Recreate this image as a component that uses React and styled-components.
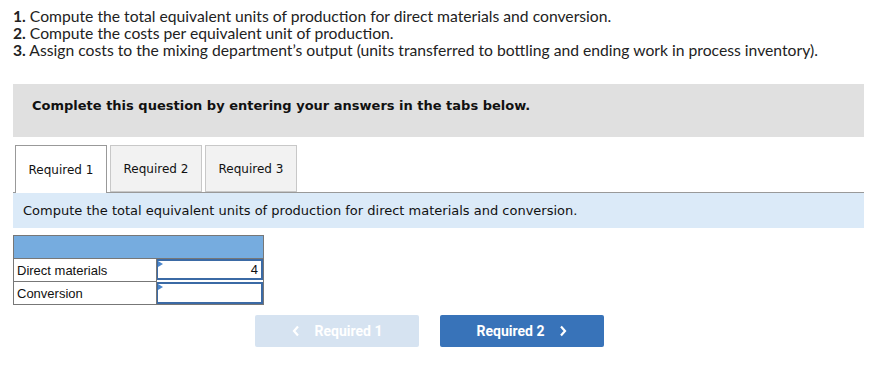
import React from "react";
import styled, { createGlobalStyle } from "styled-components";

const Global = createGlobalStyle`
  body {
    margin: 0;
    background: #fff;
  }
`;

const Page = styled.div`
  padding: 8px 24px 0 13px;
  width: 851px;
`;

const Steps = styled.ol`
  list-style: none;
  margin: 0;
  padding: 0;
  font-family: Lato, "Open Sans", sans-serif;
  font-size: 15.7px;
  line-height: 17px;
  color: #222;
`;

const Step = styled.li`
  b {
    font-weight: 700;
  }
`;

const Banner = styled.div`
  margin-top: 25px;
  height: 53px;
  box-sizing: border-box;
  background: #e0e0e0;
  padding: 14px 0 0 19px;
  font-family: "DejaVu Sans", Verdana, sans-serif;
  font-weight: bold;
  font-size: 13px;
  line-height: 16px;
  color: #111;
`;

const Tabs = styled.div`
  margin-top: 8px;
  display: flex;
  gap: 3px;
  padding-left: 2px;
  border-bottom: 1px solid #999;
`;

const Tab = styled.div`
  width: 92px;
  height: ${(p) => (p.$active ? "48px" : "47px")};
  margin-bottom: ${(p) => (p.$active ? "-1px" : "0")};
  box-sizing: border-box;
  border: 1px solid ${(p) => (p.$active ? "#999" : "#c8c8c8")};
  border-bottom: ${(p) => (p.$active ? "none" : "1px solid #c8c8c8")};
  background: ${(p) => (p.$active ? "#fff" : "#f2f2f2")};
  display: flex;
  align-items: center;
  justify-content: center;
  font-family: "DejaVu Sans", Verdana, sans-serif;
  font-size: 12px;
  color: #111;
`;

const Prompt = styled.div`
  height: 35px;
  background: #dbeaf8;
  display: flex;
  align-items: center;
  padding-left: 10px;
  font-family: "DejaVu Sans", Verdana, sans-serif;
  font-size: 13px;
  color: #111;
`;

const Grid = styled.div`
  margin-top: 7px;
  width: 251px;
  display: grid;
  grid-template-columns: 143px 106px;
  border: 1px solid #777;
  box-sizing: border-box;
  font-family: "Liberation Sans", Arial, sans-serif;
  font-size: 13px;
  color: #111;
`;

const HeadCell = styled.div`
  grid-column: 1 / 3;
  height: 22px;
  background: #76acdf;
  border-bottom: 1px solid #777;
`;

const Label = styled.div`
  height: 22px;
  display: flex;
  align-items: center;
  padding-left: 3px;
  border-right: 1px solid #777;
  border-bottom: ${(p) => (p.$last ? "none" : "1px solid #777")};
`;

const InputCell = styled.div`
  position: relative;
  height: ${(p) => (p.$last ? "22px" : "21px")};
  box-sizing: border-box;
  border: 2px solid #3b6aa5;
  border-left-width: 1px;
  margin-bottom: ${(p) => (p.$last ? "0" : "2px")};
  display: flex;
  align-items: center;
  justify-content: flex-end;
  padding-right: 3px;
  &::before {
    content: "";
    position: absolute;
    left: 0;
    top: 0;
    border-top: 3px solid transparent;
    border-bottom: 3px solid transparent;
    border-left: 5px solid #4a86cc;
  }
`;

const Nav = styled.div`
  margin-top: 10px;
  display: flex;
  gap: 21px;
  padding-left: 242px;
`;

const NavButton = styled.div`
  width: 164px;
  height: 32px;
  border-radius: 2px;
  background: ${(p) => (p.$disabled ? "#d6e3f1" : "#3873b9")};
  color: #fff;
  display: flex;
  align-items: center;
  justify-content: center;
  gap: 15px;
  font-family: Roboto, "Liberation Sans", sans-serif;
  font-weight: bold;
  font-size: 14px;
  svg {
    display: block;
  }
`;

const Chevron = ({ dir }) => (
  <svg width="8" height="12" viewBox="0 0 8 12">
    <path
      d={dir === "left" ? "M6 1.5 L2 6 L6 10.5" : "M2 1.5 L6 6 L2 10.5"}
      fill="none"
      stroke="#fff"
      strokeWidth="2.2"
    />
  </svg>
);

export default function App() {
  return (
    <>
      <Global />
      <Page>
        <Steps>
          <Step>
            <b>1.</b> Compute the total equivalent units of production for direct materials and conversion.
          </Step>
          <Step>
            <b>2.</b> Compute the costs per equivalent unit of production.
          </Step>
          <Step>
            <b>3.</b> Assign costs to the mixing department’s output (units transferred to bottling and ending work in process inventory).
          </Step>
        </Steps>
        <Banner>Complete this question by entering your answers in the tabs below.</Banner>
        <Tabs>
          <Tab $active>Required 1</Tab>
          <Tab>Required 2</Tab>
          <Tab>Required 3</Tab>
        </Tabs>
        <Prompt>Compute the total equivalent units of production for direct materials and conversion.</Prompt>
        <Grid>
          <HeadCell />
          <Label>Direct materials</Label>
          <InputCell>4</InputCell>
          <Label $last>Conversion</Label>
          <InputCell $last />
        </Grid>
        <Nav>
          <NavButton $disabled>
            <Chevron dir="left" />
            Required 1
          </NavButton>
          <NavButton>
            Required 2
            <Chevron dir="right" />
          </NavButton>
        </Nav>
      </Page>
    </>
  );
}
